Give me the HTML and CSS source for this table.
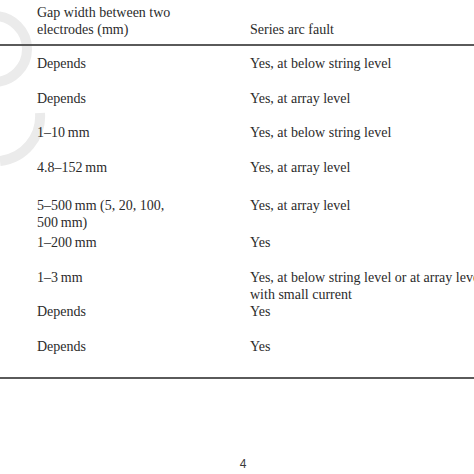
FILE: index.html
```html
<!DOCTYPE html>
<html>
<head>
<meta charset="utf-8">
<link rel="stylesheet" href="styles.css">
</head>
<body>
<div class="page">
  <svg class="watermark" width="80" height="180" viewBox="0 0 80 180">
    <circle cx="-6" cy="49" r="33" fill="none" stroke="#ebebeb" stroke-width="10"/>
    <path d="M 40 113 A 45 45 0 0 1 0 161" fill="none" stroke="#ebebeb" stroke-width="10"/>
  </svg>
  <div class="table">
    <div class="head">
      <div class="c1">Gap width between two<br>electrodes (mm)</div>
      <div class="c2">Series arc fault</div>
    </div>
    <div class="rule"></div>
    <div class="body">
      <div class="row h35"><div class="c1">Depends</div><div class="c2">Yes, at below string level</div></div>
      <div class="row h34"><div class="c1">Depends</div><div class="c2">Yes, at array level</div></div>
      <div class="row h35"><div class="c1">1–10&#8201;mm</div><div class="c2">Yes, at below string level</div></div>
      <div class="row h38"><div class="c1">4.8–152&#8201;mm</div><div class="c2">Yes, at array level</div></div>
      <div class="row h37"><div class="c1">5–500&#8201;mm (5, 20, 100,<br>500&#8201;mm)</div><div class="c2">Yes, at array level</div></div>
      <div class="row h35"><div class="c1">1–200&#8201;mm</div><div class="c2">Yes</div></div>
      <div class="row h34"><div class="c1">1–3&#8201;mm</div><div class="c2">Yes, at below string level or at array level<br>with small current</div></div>
      <div class="row h35"><div class="c1">Depends</div><div class="c2">Yes</div></div>
      <div class="row h39"><div class="c1">Depends</div><div class="c2">Yes</div></div>
    </div>
    <div class="rule"></div>
  </div>
  <div class="pagenum">4</div>
</div>
</body>
</html>
```

FILE: styles.css
```css
html, body {
  margin: 0;
  padding: 0;
  background: #ffffff;
  overflow: hidden;
}

.page {
  position: relative;
  width: 474px;
  height: 474px;
  overflow: hidden;
  font-family: "Liberation Serif", "Times New Roman", serif;
  font-size: 14px;
  line-height: 17px;
  color: #2b2b2b;
}

.watermark {
  position: absolute;
  left: 0;
  top: 0;
  z-index: 0;
}

.table {
  position: relative;
  z-index: 1;
  padding-top: 4px;
}

.head,
.row {
  display: grid;
  grid-template-columns: 213px 1fr;
  padding-left: 37px;
}

.head {
  height: 34px;
  margin-bottom: 6px;
  align-items: end;
}

.c2 {
  white-space: nowrap;
}

.rule {
  height: 2px;
  background: #5a5a5a;
}

.body {
  padding-top: 9px;
}

.h34 { height: 34px; }
.h35 { height: 35px; }
.h37 { height: 37px; }
.h38 { height: 38px; }
.h39 { height: 39px; }

.pagenum {
  position: relative;
  z-index: 1;
  margin-top: 79px;
  text-align: center;
  font-family: "Liberation Sans", Arial, sans-serif;
  font-size: 12px;
  line-height: 13px;
  color: #3a3a3a;
  padding-left: 12px;
}
```
